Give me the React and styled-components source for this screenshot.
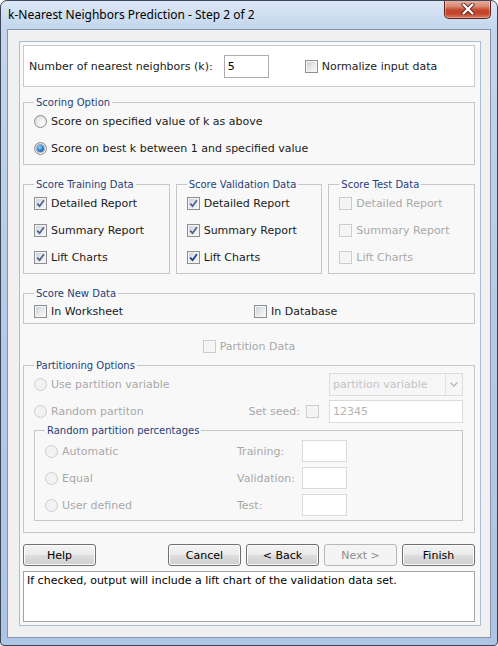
import React from 'react'
import styled, { createGlobalStyle } from 'styled-components'

const GlobalStyle = createGlobalStyle`
  html, body {
    margin: 0;
    padding: 0;
    background: #fff;
  }
  body {
    font-family: "DejaVu Sans", "Liberation Sans", sans-serif;
    font-size: 11px;
    color: #1a1a1a;
  }
  * {
    box-sizing: border-box;
  }
`

const Window = styled.div`
  width: 498px;
  height: 646px;
  display: flex;
  flex-direction: column;
  border: 1px solid #3b4656;
  border-radius: 7px 7px 4px 4px;
  background: linear-gradient(180deg, #dbe7f5 0%, #c3d6ed 28px, #b4cae6 50%, #aec5e3 100%);
  overflow: hidden;
`

const TitleBar = styled.div`
  height: 28px;
  display: flex;
  align-items: flex-start;
  padding-left: 7px;
  flex: none;
`

const Title = styled.div`
  font-family: "Noto Sans", "Liberation Sans", sans-serif;
  font-size: 12px;
  line-height: 28px;
  color: #000;
`

const CloseButton = styled.div`
  margin-left: auto;
  margin-right: 6px;
  width: 47px;
  height: 19px;
  margin-top: -1px;
  border: 1px solid #5e2418;
  border-top: none;
  border-radius: 0 0 5px 5px;
  background: linear-gradient(180deg, #eab2a2 0%, #d98a73 35%, #c4492f 55%, #c0432a 75%, #d9775d 100%);
  box-shadow: inset 0 0 0 1px rgba(255, 255, 255, 0.35);
  display: flex;
  align-items: center;
  justify-content: center;
`

const Client = styled.div`
  flex: 1;
  margin: 0 6px 7px 6px;
  border: 1px solid #8594a9;
  background: #f0f0f0;
  padding: 11px 9px 11px 11px;
`

const Panel = styled.div`
  border: 1px solid #aabdd5;
  background: #f8f8f8;
  padding: 3px 5px 3px 3px;
  display: flex;
  flex-direction: column;
`

const TopBox = styled.div`
  height: 42px;
  border: 1px solid #cacaca;
  background: #fff;
  display: flex;
  align-items: center;
  padding-left: 5px;
  font-size: 11px;
`

const TextInput = styled.div`
  width: ${p => p.$w || 45}px;
  height: ${p => p.$h || 23}px;
  margin-left: ${p => p.$ml || 0}px;
  border: 1px solid ${p => (p.$disabled ? '#dadada' : '#abadb3')};
  background: #fff;
  color: ${p => (p.$disabled ? '#b4b4b4' : '#000')};
  padding-left: 3px;
  display: flex;
  align-items: center;
  font-size: 11px;
  flex: none;
`

const Group = styled.fieldset`
  margin: ${p => p.$mt || 0}px 0 0;
  padding: ${p => p.$pad || '0 10px 2px'};
  border: 1px solid #c6c6c6;
  min-width: 0;
`

const Legend = styled.legend`
  padding: 0 2px;
  font-size: 10px;
  line-height: 11px;
  color: #1f3f7c;
`

const Row = styled.div`
  height: ${p => p.$h || 27}px;
  margin-top: ${p => p.$mt || 0}px;
  display: flex;
  align-items: center;
  justify-content: ${p => (p.$center ? 'center' : 'flex-start')};
`

const Option = styled.label`
  display: flex;
  align-items: center;
  gap: 4px;
  width: ${p => (p.$w ? `${p.$w}px` : 'auto')};
  color: ${p => (p.$disabled ? '#a8a8a8' : '#1a1a1a')};
  font-size: 11px;
  white-space: nowrap;
  flex: none;
`

const Box = styled.span`
  width: 13px;
  height: 13px;
  flex: none;
  border: 1px solid ${p => (p.$disabled ? '#cbcbcb' : '#8e8f8f')};
  background: ${p =>
    p.$disabled ? '#f4f4f4' : 'linear-gradient(135deg, #c9ced5 0%, #e8eaec 55%, #fafafa 100%)'};
  box-shadow: inset 0 0 0 1px ${p => (p.$disabled ? '#f7f7f7' : '#f4f4f4')};
  display: inline-flex;
  align-items: center;
  justify-content: center;
`

const Round = styled.span`
  width: 13px;
  height: 13px;
  flex: none;
  border-radius: 50%;
  border: 1px solid ${p => (p.$disabled ? '#cdcdcd' : '#8a8c8f')};
  background: ${p =>
    p.$disabled ? '#f2f2f2' : 'radial-gradient(circle at 65% 70%, #fdfdfd 0%, #e9eaeb 50%, #cfd2d6 100%)'};
  display: inline-flex;
  align-items: center;
  justify-content: center;
`

const Dot = styled.span`
  width: 7px;
  height: 7px;
  border-radius: 50%;
  background: radial-gradient(circle at 40% 35%, #a6dcff 0%, #2f86d4 45%, #12427f 100%);
  box-shadow: 0 0 0 1px rgba(30, 70, 120, 0.35);
`

const ThreeCols = styled.div`
  display: grid;
  grid-template-columns: repeat(3, 1fr);
  gap: 6px;
  margin-top: 14px;
`

const SelectBox = styled.div`
  margin-left: auto;
  width: 134px;
  height: 23px;
  border: 1px solid #dcdcdc;
  background: #f6f6f6;
  display: flex;
  align-items: center;
  color: #c4c4c4;
  font-size: 11px;
`

const SelectText = styled.span`
  flex: 1;
  padding-left: 3px;
`

const SelectArrow = styled.span`
  width: 17px;
  height: 100%;
  border-left: 1px solid #e2e2e2;
  display: flex;
  align-items: center;
  justify-content: center;
`

const SeedLabel = styled.span`
  margin-left: auto;
  color: #a8a8a8;
  margin-right: 6px;
`

const PctGrid = styled.div`
  display: grid;
  grid-template-columns: 192px 65px 45px;
  grid-auto-rows: 22px;
  row-gap: 5px;
  align-items: center;
  margin-top: 2px;
`

const PctLabel = styled.span`
  color: #a8a8a8;
`

const ButtonRow = styled.div`
  display: flex;
  gap: 5px;
  margin-top: 11px;
`

const Button = styled.div`
  width: 73px;
  height: 22px;
  margin-right: ${p => (p.$push ? 'auto' : '0')};
  border: 1px solid ${p => (p.$disabled ? '#b5b8bb' : '#707070')};
  border-radius: 3px;
  background: ${p =>
    p.$disabled
      ? '#f4f4f4'
      : 'linear-gradient(180deg, #f3f3f3 0%, #ebebeb 48%, #dddddd 52%, #cfcfcf 100%)'};
  box-shadow: inset 0 0 0 1px ${p => (p.$disabled ? '#f4f4f4' : '#fcfcfc')};
  color: ${p => (p.$disabled ? '#8d8d8d' : '#000')};
  display: flex;
  align-items: center;
  justify-content: center;
  font-size: 11px;
`

const Description = styled.div`
  margin-top: 5px;
  height: 51px;
  border: 1px solid #a4a4a4;
  background: #fff;
  padding: 2px 3px;
  line-height: 14px;
  font-size: 11px;
  color: #000;
`

function Check({ checked, disabled, strong }) {
  return (
    <Box $disabled={disabled}>
      {checked && (
        <svg width="9" height="9" viewBox="0 0 9 9">
          <path
            d="M1.2 4.6 L3.6 7.2 L7.9 1.2"
            fill="none"
            stroke={strong ? '#1b3f8f' : '#4d6290'}
            strokeWidth="1.7"
          />
        </svg>
      )}
    </Box>
  )
}

function Radio({ checked, disabled }) {
  return <Round $disabled={disabled}>{checked && <Dot />}</Round>
}

function CheckOption({ label, checked, disabled, strong, w }) {
  return (
    <Option $disabled={disabled} $w={w}>
      <Check checked={checked} disabled={disabled} strong={strong} />
      {label}
    </Option>
  )
}

function RadioOption({ label, checked, disabled, w }) {
  return (
    <Option $disabled={disabled} $w={w}>
      <Radio checked={checked} disabled={disabled} />
      {label}
    </Option>
  )
}

const scoreGroups = [
  { title: 'Score Training Data', checks: [true, true, true] },
  { title: 'Score Validation Data', checks: [true, true, true], strong: 2 },
  { title: 'Score Test Data', checks: [false, false, false], disabled: true },
]

const reports = ['Detailed Report', 'Summary Report', 'Lift Charts']

const percentages = [
  { label: 'Automatic', field: 'Training:' },
  { label: 'Equal', field: 'Validation:' },
  { label: 'User defined', field: 'Test:' },
]

export default function App() {
  return (
    <>
      <GlobalStyle />
      <Window>
        <TitleBar>
          <Title>k-Nearest Neighbors Prediction - Step 2 of 2</Title>
          <CloseButton>
            <svg width="14" height="12" viewBox="0 0 14 12">
              <path
                d="M2.5 1.5 L11.5 10.5 M11.5 1.5 L2.5 10.5"
                stroke="#5a2a22"
                strokeWidth="4"
                strokeLinecap="round"
              />
              <path
                d="M2.5 1.5 L11.5 10.5 M11.5 1.5 L2.5 10.5"
                stroke="#fff"
                strokeWidth="2.2"
                strokeLinecap="round"
              />
            </svg>
          </CloseButton>
        </TitleBar>
        <Client>
          <Panel>
            <TopBox>
              <span>Number of nearest neighbors (k):</span>
              <TextInput $ml={11}>5</TextInput>
              <Option style={{ marginLeft: 36 }}>
                <Check />
                Normalize input data
              </Option>
            </TopBox>

            <Group $mt={10}>
              <Legend>Scoring Option</Legend>
              <Row>
                <RadioOption label="Score on specified value of k as above" />
              </Row>
              <Row>
                <RadioOption label="Score on best k between 1 and specified value" checked />
              </Row>
            </Group>

            <ThreeCols>
              {scoreGroups.map(g => (
                <Group key={g.title}>
                  <Legend>{g.title}</Legend>
                  {reports.map((r, i) => (
                    <Row key={r}>
                      <CheckOption
                        label={r}
                        checked={g.checks[i]}
                        disabled={g.disabled}
                        strong={g.strong === i}
                      />
                    </Row>
                  ))}
                </Group>
              ))}
            </ThreeCols>

            <Group $mt={14} $pad="1px 10px 0">
              <Legend>Score New Data</Legend>
              <Row $h={23}>
                <CheckOption label="In Worksheet" w={220} />
                <CheckOption label="In Database" />
              </Row>
            </Group>

            <Row $h={22} $mt={11} $center>
              <CheckOption label="Partition Data" disabled />
            </Row>

            <Group $mt={3} $pad="2px 11px 11px 10px">
              <Legend>Partitioning Options</Legend>
              <Row $h={23}>
                <RadioOption label="Use partition variable" disabled />
                <SelectBox>
                  <SelectText>partition variable</SelectText>
                  <SelectArrow>
                    <svg width="8" height="5" viewBox="0 0 8 5">
                      <path d="M0.5 0.5 L4 4 L7.5 0.5" fill="none" stroke="#b8b8b8" strokeWidth="1.3" />
                    </svg>
                  </SelectArrow>
                </SelectBox>
              </Row>
              <Row $h={23} $mt={4}>
                <RadioOption label="Random partiton" disabled />
                <SeedLabel>Set seed:</SeedLabel>
                <Check disabled />
                <TextInput $disabled $w={134} $ml={10}>
                  12345
                </TextInput>
              </Row>
              <Group $mt={2} $pad="2px 10px 4px">
                <Legend>Random partition percentages</Legend>
                <PctGrid>
                  {percentages.map(p => (
                    <React.Fragment key={p.label}>
                      <RadioOption label={p.label} disabled />
                      <PctLabel>{p.field}</PctLabel>
                      <TextInput $disabled $w={45} $h={22} />
                    </React.Fragment>
                  ))}
                </PctGrid>
              </Group>
            </Group>

            <ButtonRow>
              <Button $push>Help</Button>
              <Button>Cancel</Button>
              <Button>&lt; Back</Button>
              <Button $disabled>Next &gt;</Button>
              <Button>Finish</Button>
            </ButtonRow>

            <Description>
              If checked, output will include a lift chart of the validation data set.
            </Description>
          </Panel>
        </Client>
      </Window>
    </>
  )
}
